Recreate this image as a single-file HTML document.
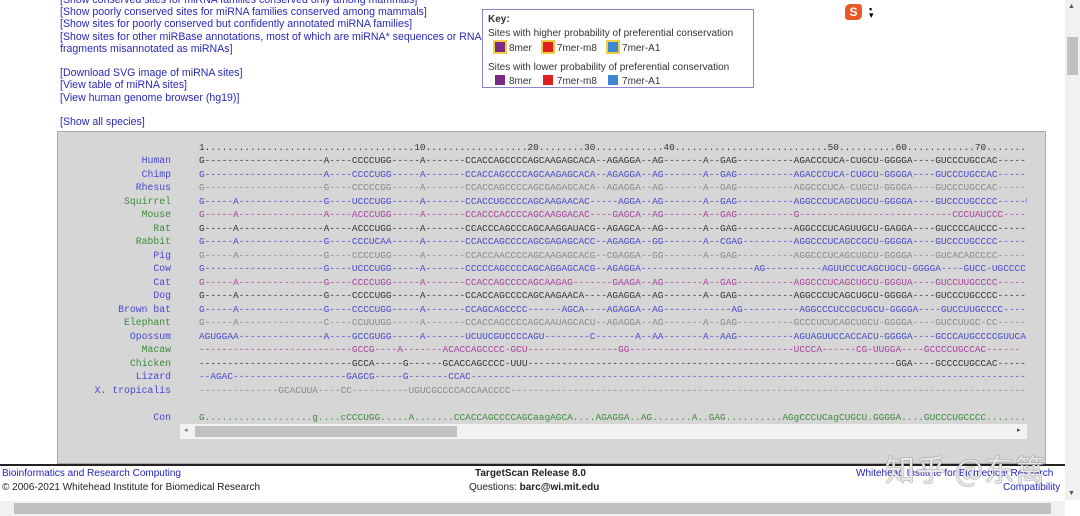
<!DOCTYPE html>
<html><head><meta charset="utf-8"><style>
body{margin:0;width:1080px;height:516px;overflow:hidden;background:#fff;font-family:"Liberation Sans",sans-serif;position:relative}
a,.lnk{color:#2222bb;text-decoration:none}
.links{position:absolute;left:60px;top:-6px;font-size:10.6px;line-height:12.2px;color:#2a2ab8;white-space:nowrap}
.key{position:absolute;left:482px;top:9px;width:272px;height:79px;border:1px solid #8a84c8;font-size:10px;color:#333;box-sizing:border-box;background:#fff}
.key div{position:absolute;white-space:nowrap}
.sw{display:inline-block;width:10px;height:10px;vertical-align:-1px;margin-right:4px}
.hl{outline:2px solid #f0d040}
.box{position:absolute;left:57px;top:131px;width:989px;height:333px;background:#d6d6d6;border:1px solid #aaa;box-sizing:border-box}
.lab{position:absolute;right:909px;font-family:"Liberation Mono",monospace;font-size:9.8px;white-space:nowrap;text-align:right}
.seq{position:absolute;left:199px;font-family:"Liberation Mono",monospace;font-size:9.45px;white-space:pre;overflow:hidden;width:828px}
.b{color:#4848d0}.g{color:#888}.k{color:#333}.p{color:#a8409e}.gr{color:#3d8a3d}
.iscroll{position:absolute;left:180px;top:424px;width:847px;height:15px;background:#f2f2f2}
.foot{position:absolute;font-size:10px;white-space:nowrap}
</style></head><body>
<div class="links">
[Show conserved sites for miRNA families conserved only among mammals]<br>
[Show poorly conserved sites for miRNA families conserved among mammals]<br>
[Show sites for poorly conserved but confidently annotated miRNA families]<br>
[Show sites for other miRBase annotations, most of which are miRNA* sequences or RNA<br>fragments misannotated as miRNAs]<br><br>
[Download SVG image of miRNA sites]<br>
[View table of miRNA sites]<br>
[View human genome browser (hg19)]<br><br>
[Show all species]
</div>
<div class="key">
<div style="left:5px;top:4px;font-weight:bold">Key:</div>
<div style="left:5px;top:18px">Sites with higher probability of preferential conservation</div>
<div style="left:12px;top:32px"><span class="sw hl" style="background:#7b2a85"></span>8mer &nbsp;&nbsp;&nbsp;<span class="sw hl" style="background:#e02020"></span>7mer-m8 &nbsp;&nbsp;&nbsp;<span class="sw hl" style="background:#3f86d0"></span>7mer-A1</div>
<div style="left:5px;top:52px">Sites with lower probability of preferential conservation</div>
<div style="left:12px;top:65px"><span class="sw" style="background:#7b2a85"></span>8mer &nbsp;&nbsp;&nbsp;<span class="sw" style="background:#e02020"></span>7mer-m8 &nbsp;&nbsp;&nbsp;<span class="sw" style="background:#3f86d0"></span>7mer-A1</div>
</div>
<div style="position:absolute;left:845px;top:4px;width:17px;height:16px;background:#e8582a;border-radius:5px 3px 5px 3px;color:#fff;font-weight:bold;font-size:12px;text-align:center;line-height:16px">S</div>
<div style="position:absolute;left:869px;top:6px;font-size:9px;line-height:6px">▪<br>▾</div>
<div style="position:absolute;left:1065px;top:0;width:15px;height:500px;background:#f1f1f1"></div>
<div style="position:absolute;left:1067px;top:37px;width:11px;height:38px;background:#c1c1c1"></div>
<div style="position:absolute;left:1068px;top:3px;font-size:7px;color:#555">▲</div>
<div style="position:absolute;left:1068px;top:490px;font-size:7px;color:#555">▼</div>

<div class="box"></div>
<div class="seq k" style="top:142px">1.....................................10..................20........30............40...........................50..........60............70...............</div>
<div class="lab b" style="top:155px">Human</div><div class="seq k" style="top:155px">G---------------------A----CCCCUGG-----A-------CCACCAGCCCCAGCAAGAGCACA--AGAGGA--AG-------A--GAG----------AGACCCUCA-CUGCU-GGGGA----GUCCCUGCCAC------</div>
<div class="lab b" style="top:169px">Chimp</div><div class="seq b" style="top:169px">G---------------------A----CCCCUGG-----A-------CCACCAGCCCCAGCAAGAGCACA--AGAGGA--AG-------A--GAG----------AGACCCUCA-CUGCU-GGGGA----GUCCCUGCCAC------</div>
<div class="lab b" style="top:182px">Rhesus</div><div class="seq g" style="top:182px">G---------------------G----CCCCCGG-----A-------CCACCAGCCCCAGCGAGAGCACA--AGAGGA--AG-------A--GAG----------AGGCCCUCA-CUGCU-GGGGA----GUCCCUGCCAC------</div>
<div class="lab gr" style="top:196px">Squirrel</div><div class="seq b" style="top:196px">G-----A---------------G----UCCCUGG-----A-------CCACCUGCCCCAGCAAGAACAC-----AGGA--AG-------A--GAG----------AGGCCCUCAGCUGCU-GGGGA----GUCCCUGCCCC-----U</div>
<div class="lab gr" style="top:209px">Mouse</div><div class="seq p" style="top:209px">G-----A---------------A----ACCCUGG-----A-------CCACCCACCCCAGCAAGGACAC----GAGCA--AG-------A--GAG----------G---------------------------CCCUAUCCC------</div>
<div class="lab gr" style="top:223px">Rat</div><div class="seq k" style="top:223px">G-----A---------------A----ACCCUGG-----A-------CCACCCAGCCCAGCAAGGAUACG--AGAGCA--AG-------A--GAG----------AGGCCCUCAGUUGCU-GAGGA----GUCCCCAUCCC------</div>
<div class="lab gr" style="top:236px">Rabbit</div><div class="seq b" style="top:236px">G-----A---------------G----CCCUCAA-----A-------CCACCAGCCCCAGCGAGAGCACC--AGAGGA--GG-------A--CGAG---------AGGCCCUCAGCCGCU-GGGGA----GUCCCUGCCCC------</div>
<div class="lab b" style="top:250px">Pig</div><div class="seq g" style="top:250px">G-----A---------------G----CCCCUGG-----A-------CCACCAACCCCAGCAAGAGCACG--CGAGGA--GG-------A--GAG----------AGGCCCUCAGCUGCU-GGGGA----GUCACAGCCCC------</div>
<div class="lab b" style="top:263px">Cow</div><div class="seq b" style="top:263px">G---------------------G----UCCCUGG-----A-------CCCCCAGCCCCAGCAGGAGCACG--AGAGGA--------------------AG----------AGUUCCUCAGCUGCU-GGGGA----GUCC-UGCCCC------</div>
<div class="lab b" style="top:277px">Cat</div><div class="seq p" style="top:277px">G-----A---------------G----CCCCUGG-----A-------CCACCAGCCCCAGCAAGAG-------GAAGA--AG-------A--GAG----------AGGCCCUCAGCUGCU-GGGUA----GUCCUUGCCCC------</div>
<div class="lab b" style="top:290px">Dog</div><div class="seq k" style="top:290px">G-----A---------------G----CCCCUGG-----A-------CCACCAGCCCCAGCAAGAACA----AGAGGA--AG-------A--GAG----------AGGCCCUCAGCUGCU-GGGGA----GUCCCUGCCCC------</div>
<div class="lab b" style="top:304px">Brown bat</div><div class="seq b" style="top:304px">G-----A---------------G----CCCCUGG-----A-------CCAGCAGCCCC------AGCA----AGAGGA--AG------------AG----------AGGCCCUCCGCUGCU-GGGGA----GUCCUUGCCCC------</div>
<div class="lab gr" style="top:317px">Elephant</div><div class="seq g" style="top:317px">G-----A---------------C----CCUUUGG-----A-------CCACCAGCCCCAGCAAUAGCACU--AGAGGA--AG-------A--GAG----------GCCCUCUCAGCUGCU-GGGGA----GUCCUUGC-CC------</div>
<div class="lab b" style="top:331px">Opossum</div><div class="seq b" style="top:331px">AGUGGAA---------------A----GCCGUGG-----A-------UCUUCGUCCCCAGU--------C-------A--AA-------A--AAG----------AGUAGUUCCACCACU-GGGGA----GCCCAUGCCCCGUUCA--</div>
<div class="lab gr" style="top:344px">Macaw</div><div class="seq p" style="top:344px">---------------------------GCCG----A-------ACACCAGCCCC-GCU----------------GG-----------------------------UCCCA------CG-UUGGA----GCCCCUGCCAC------</div>
<div class="lab gr" style="top:358px">Chicken</div><div class="seq k" style="top:358px">---------------------------GCCA-----G------GCACCAGCCCC-UUU-----------------------------------------------------------------GGA----GCCCCUGCCAC------</div>
<div class="lab b" style="top:371px">Lizard</div><div class="seq b" style="top:371px">--AGAC--------------------GAGCG-----G-------CCAC--------------------------------------------------------------------------------------------------</div>
<div class="lab b" style="top:385px">X. tropicalis</div><div class="seq g" style="top:385px">--------------GCACUUA----CC----------UGUCGCCCCACCAACCCC--------------------------------------------------------------------------------------------</div>
<div class="lab b" style="top:412px">Con</div><div class="seq gr" style="top:412px">G...................g....cCCCUGG.....A.......CCACCAGCCCCAGCaagAGCA....AGAGGA..AG.......A..GAG..........AGgCCCUCagCUGCU.GGGGA....GUCCCUGCCCC.......</div>
<div class="iscroll"></div>
<div style="position:absolute;left:195px;top:426px;width:262px;height:11px;background:#c1c1c1"></div>
<div style="position:absolute;left:184px;top:426px;font-size:7px;color:#777">◂</div>
<div style="position:absolute;left:1017px;top:426px;font-size:7px;color:#444">▸</div>

<div style="position:absolute;left:0;top:464px;width:1065px;height:2px;background:#222"></div>
<div class="foot lnk" style="left:2px;top:468px">Bioinformatics and Research Computing</div>
<div class="foot" style="left:2px;top:482px;color:#222">© 2006-2021 Whitehead Institute for Biomedical Research</div>
<div class="foot" style="left:475px;top:468px;font-weight:bold;color:#222">TargetScan Release 8.0</div>
<div class="foot" style="left:469px;top:482px;color:#222">Questions: <b>barc@wi.mit.edu</b></div>
<div class="foot lnk" style="left:856px;top:468px">Whitehead Institute for Biomedical Research</div>
<div class="foot lnk" style="left:1003px;top:482px">Compatibility</div>
<div style="position:absolute;left:885px;top:446px;font-family:'Noto Sans CJK SC',sans-serif;font-size:30px;color:rgba(255,255,255,0.85);text-shadow:0 0 1px #666,0 0 1px #666;white-space:nowrap;letter-spacing:1px">知乎 @东篱</div>
<div style="position:absolute;left:0;top:501px;width:1065px;height:15px;background:#f1f1f1"></div>
<div style="position:absolute;left:14px;top:503px;width:1037px;height:11px;background:#c1c1c1"></div>
</body></html>
